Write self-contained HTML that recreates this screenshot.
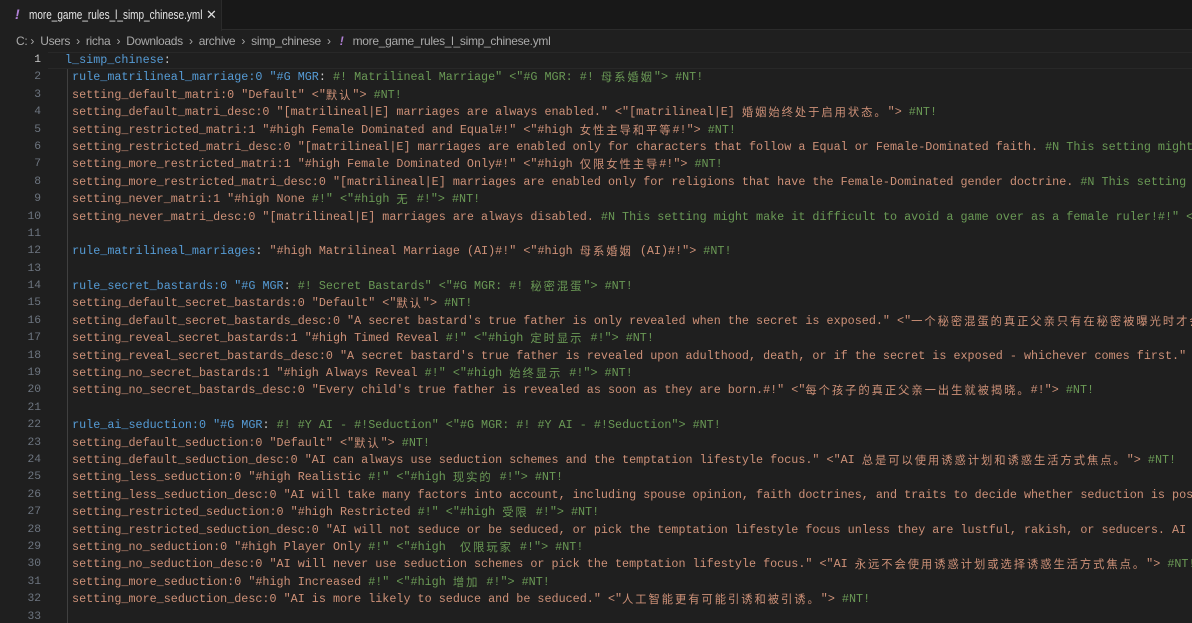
<!DOCTYPE html>
<html><head><meta charset="utf-8"><style>
html,body{margin:0;padding:0;background:#1f1f1f;width:1192px;height:623px;overflow:hidden}
.tabbar{position:absolute;left:0;top:0;width:1192px;height:30px;background:#181818;border-bottom:1px solid #2b2b2b;box-sizing:border-box}
.tab{position:absolute;left:0;top:0;width:222px;height:31px;background:#1f1f1f;border-right:1px solid #2b2b2b;box-sizing:border-box;font:12.5px "Liberation Sans",sans-serif;color:#e6e6e6;white-space:nowrap}
.tab .ex{position:absolute;left:15px;top:6px;color:#b180d7;font-weight:bold;font-style:italic;font-size:14px}
.tab .nm{position:absolute;left:29px;top:8px;transform:scaleX(0.8);transform-origin:0 0}
.tab .x{position:absolute;left:206px;top:7px;font-size:13px;color:#ddd}
.crumb{position:absolute;left:16px;top:34px;height:18px;font:12px "Liberation Sans",sans-serif;color:#a9a9a9;white-space:pre;letter-spacing:-0.3px}
.crumb .p{color:#b180d7;font-weight:bold;font-style:italic}
.ed{position:absolute;left:0;top:52px;width:1192px;height:571px;overflow:hidden}
.nums{position:absolute;left:0;top:0;width:41px;text-align:right;font:11.27px/17.4px "Liberation Mono",monospace;color:#6e7681}
.nums div{height:17.4px}
.code{position:absolute;left:65px;top:0;width:1200px;font:11.75px/17.4px "Liberation Mono",monospace;color:#ce9178}
.code div{height:17.4px;line-height:17.4px;overflow:hidden;white-space:pre}
.b{color:#569cd6}.w{color:#cccccc}.g{color:#6a9955}
.c{font-family:"Noto Sans CJK SC",sans-serif;letter-spacing:1.95px;display:inline-block;height:17.4px;line-height:17.4px;vertical-align:top;font-size:11.3px}
.cur{position:absolute;left:48px;top:0;width:1144px;height:17px;border-top:1px solid #282828;border-bottom:1px solid #282828;box-sizing:border-box}
.guide{position:absolute;left:67px;top:17.4px;width:1px;height:560px;background:#404040}
</style></head><body>
<div class="tabbar"><div class="tab"><span class="ex">!</span><span class="nm">more_game_rules_l_simp_chinese.yml</span><span class="x">✕</span></div></div>
<div class="crumb">C: ›  Users  ›  richa  ›  Downloads  ›  archive  ›  simp_chinese  ›   <span class="p">!</span>   more_game_rules_l_simp_chinese.yml</div>
<div class="ed"><div class="cur"></div><div class="guide"></div>
<div class="nums"><div style="color:#ccc">1</div><div>2</div><div>3</div><div>4</div><div>5</div><div>6</div><div>7</div><div>8</div><div>9</div><div>10</div><div>11</div><div>12</div><div>13</div><div>14</div><div>15</div><div>16</div><div>17</div><div>18</div><div>19</div><div>20</div><div>21</div><div>22</div><div>23</div><div>24</div><div>25</div><div>26</div><div>27</div><div>28</div><div>29</div><div>30</div><div>31</div><div>32</div><div>33</div></div>
<div class="code"><div><span class="b">l_simp_chinese</span><span class="w">:</span></div><div> <span class="b">rule_matrilineal_marriage:0 "#G MGR</span><span class="w">:</span><span class="g"> #! Matrilineal Marriage" &lt;"#G MGR: #! <span class="c">母系婚姻</span>"&gt; #NT!</span></div><div> setting_default_matri:0 "Default" &lt;"<span class="c">默认</span>"&gt;<span class="g"> #NT!</span></div><div> setting_default_matri_desc:0 "[matrilineal|E] marriages are always enabled." &lt;"[matrilineal|E] <span class="c">婚姻始终处于启用状态。</span>"&gt;<span class="g"> #NT!</span></div><div> setting_restricted_matri:1 "#high Female Dominated and Equal#!" &lt;"#high <span class="c">女性主导和平等</span>#!"&gt;<span class="g"> #NT!</span></div><div> setting_restricted_matri_desc:0 "[matrilineal|E] marriages are enabled only for characters that follow a Equal or Female-Dominated faith.<span class="g"> #N This setting might make</span></div><div> setting_more_restricted_matri:1 "#high Female Dominated Only#!" &lt;"#high <span class="c">仅限女性主导</span>#!"&gt;<span class="g"> #NT!</span></div><div> setting_more_restricted_matri_desc:0 "[matrilineal|E] marriages are enabled only for religions that have the Female-Dominated gender doctrine.<span class="g"> #N This setting might</span></div><div> setting_never_matri:1 "#high None<span class="g"> #!" &lt;"#high <span class="c">无</span> #!"&gt; #NT!</span></div><div> setting_never_matri_desc:0 "[matrilineal|E] marriages are always disabled.<span class="g"> #N This setting might make it difficult to avoid a game over as a female ruler!#!" &lt;"</span></div><div> </div><div> <span class="b">rule_matrilineal_marriages</span><span class="w">:</span> "#high Matrilineal Marriage (AI)#!" &lt;"#high <span class="c">母系婚姻</span> (AI)#!"&gt;<span class="g"> #NT!</span></div><div> </div><div> <span class="b">rule_secret_bastards:0 "#G MGR</span><span class="w">:</span><span class="g"> #! Secret Bastards" &lt;"#G MGR: #! <span class="c">秘密混蛋</span>"&gt; #NT!</span></div><div> setting_default_secret_bastards:0 "Default" &lt;"<span class="c">默认</span>"&gt;<span class="g"> #NT!</span></div><div> setting_default_secret_bastards_desc:0 "A secret bastard's true father is only revealed when the secret is exposed." &lt;"<span class="c">一个秘密混蛋的真正父亲只有在秘密被曝光时才会</span></div><div> setting_reveal_secret_bastards:1 "#high Timed Reveal<span class="g"> #!" &lt;"#high <span class="c">定时显示</span> #!"&gt; #NT!</span></div><div> setting_reveal_secret_bastards_desc:0 "A secret bastard's true father is revealed upon adulthood, death, or if the secret is exposed - whichever comes first." &lt;</div><div> setting_no_secret_bastards:1 "#high Always Reveal<span class="g"> #!" &lt;"#high <span class="c">始终显示</span> #!"&gt; #NT!</span></div><div> setting_no_secret_bastards_desc:0 "Every child's true father is revealed as soon as they are born.#!" &lt;"<span class="c">每个孩子的真正父亲一出生就被揭晓。</span>#!"&gt;<span class="g"> #NT!</span></div><div> </div><div> <span class="b">rule_ai_seduction:0 "#G MGR</span><span class="w">:</span><span class="g"> #! #Y AI - #!Seduction" &lt;"#G MGR: #! #Y AI - #!Seduction"&gt; #NT!</span></div><div> setting_default_seduction:0 "Default" &lt;"<span class="c">默认</span>"&gt;<span class="g"> #NT!</span></div><div> setting_default_seduction_desc:0 "AI can always use seduction schemes and the temptation lifestyle focus." &lt;"AI <span class="c">总是可以使用诱惑计划和诱惑生活方式焦点。</span>"&gt;<span class="g"> #NT!</span></div><div> setting_less_seduction:0 "#high Realistic<span class="g"> #!" &lt;"#high <span class="c">现实的</span> #!"&gt; #NT!</span></div><div> setting_less_seduction_desc:0 "AI will take many factors into account, including spouse opinion, faith doctrines, and traits to decide whether seduction is possible</div><div> setting_restricted_seduction:0 "#high Restricted<span class="g"> #!" &lt;"#high <span class="c">受限</span> #!"&gt; #NT!</span></div><div> setting_restricted_seduction_desc:0 "AI will not seduce or be seduced, or pick the temptation lifestyle focus unless they are lustful, rakish, or seducers. AI</div><div> setting_no_seduction:0 "#high Player Only<span class="g"> #!" &lt;"#high  <span class="c">仅限玩家</span> #!"&gt; #NT!</span></div><div> setting_no_seduction_desc:0 "AI will never use seduction schemes or pick the temptation lifestyle focus." &lt;"AI <span class="c">永远不会使用诱惑计划或选择诱惑生活方式焦点。</span>"&gt;<span class="g"> #NT!</span></div><div> setting_more_seduction:0 "#high Increased<span class="g"> #!" &lt;"#high <span class="c">增加</span> #!"&gt; #NT!</span></div><div> setting_more_seduction_desc:0 "AI is more likely to seduce and be seduced." &lt;"<span class="c">人工智能更有可能引诱和被引诱。</span>"&gt;<span class="g"> #NT!</span></div><div> </div></div></div>
</body></html>
